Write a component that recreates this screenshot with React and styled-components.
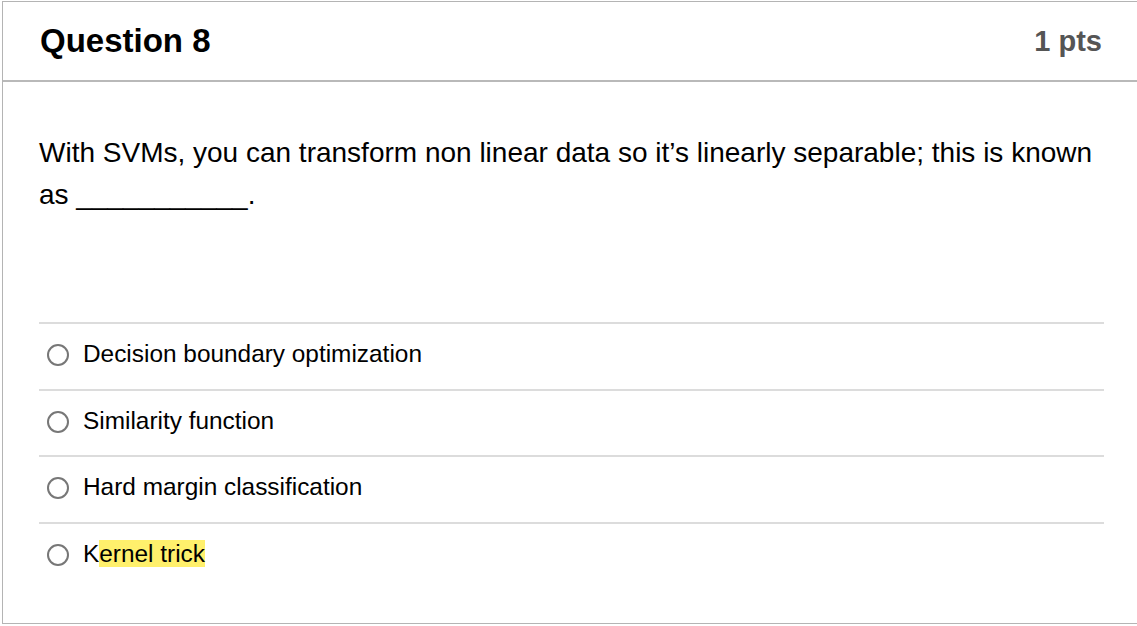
import React from 'react';
import styled, { createGlobalStyle } from 'styled-components';

const GlobalStyle = createGlobalStyle`
  html, body {
    margin: 0;
    padding: 0;
    background: #fff;
    overflow: hidden;
  }
  body {
    font-family: "Liberation Sans", Arial, sans-serif;
    color: #000;
  }
`;

const Page = styled.div`
  padding: 1px 0 0 2px;
`;

const Card = styled.div`
  width: 1136px;
  border: 1px solid #b4b4b4;
  background: #fff;
`;

const Header = styled.header`
  height: 78px;
  display: flex;
  align-items: center;
  justify-content: space-between;
  padding: 0 37px;
  border-bottom: 2px solid #b9b9b9;
`;

const Title = styled.h2`
  margin: 0;
  font-size: 33px;
  font-weight: 700;
  color: #000;
`;

const Points = styled.div`
  font-size: 29px;
  font-weight: 700;
  color: #555;
`;

const Body = styled.div`
  padding: 50px 35px 35px 36px;
`;

const Prompt = styled.p`
  margin: 0 0 106px;
  font-size: 28px;
  line-height: 42px;
`;

const Answers = styled.div`
  display: flex;
  flex-direction: column;
`;

const Answer = styled.label`
  display: flex;
  align-items: flex-start;
  padding: 16px 0 21.5px;
  border-top: 2px solid #dcdcdc;
  font-size: 24.4px;
  line-height: 27px;
`;

const Radio = styled.span`
  flex: none;
  width: 18px;
  height: 18px;
  margin: 4px 14px 0 8px;
  border: 2px solid #777;
  border-radius: 50%;
  background: #fff;
`;

const Mark = styled.mark`
  background: #fff06c;
  color: inherit;
  padding: 0;
`;

const answers = [
  { id: 1, text: 'Decision boundary optimization' },
  { id: 2, text: 'Similarity function' },
  { id: 3, text: 'Hard margin classification' },
  { id: 4, text: 'K', highlight: 'ernel trick' },
];

export default function App() {
  return (
    <Page>
      <GlobalStyle />
      <Card>
        <Header>
          <Title>Question 8</Title>
          <Points>1 pts</Points>
        </Header>
        <Body>
          <Prompt>
            With SVMs, you can transform non linear data so it’s linearly separable; this is known
            as ___________.
          </Prompt>
          <Answers>
            {answers.map(a => (
              <Answer key={a.id}>
                <Radio />
                <span>
                  {a.text}
                  {a.highlight && <Mark>{a.highlight}</Mark>}
                </span>
              </Answer>
            ))}
          </Answers>
        </Body>
      </Card>
    </Page>
  );
}
